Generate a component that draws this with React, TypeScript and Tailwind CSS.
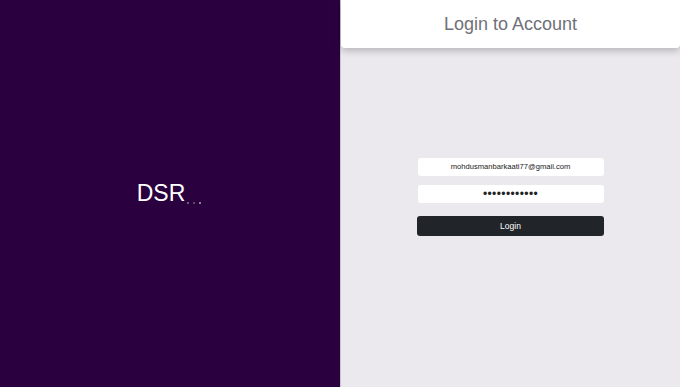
export default function App() {
  return (
    <div className="flex h-[387px] w-[680px] overflow-hidden" style={{ fontFamily: '"Liberation Sans", Arial, sans-serif' }}>
      <div className="flex h-full w-[340px] items-center justify-center bg-[#2a003f]">
        <div className="flex items-end pr-[2px]">
          <span className="text-[23px] leading-none text-white">DSR</span>
          <div className="mb-[1px] ml-[2px] flex gap-[4px]">
            <span className="h-[2px] w-[2px] bg-[#6d5c79]" />
            <span className="h-[2px] w-[2px] bg-[#5a4866]" />
            <span className="h-[2px] w-[2px] bg-[#8e7f99]" />
          </div>
        </div>
      </div>
      <div className="flex h-full w-[340px] flex-col border-l border-[#c9c6d0] bg-[#ebe9ee]">
        <div className="flex h-[48px] items-center justify-center rounded-b-[4px] bg-white shadow-[0_3px_7px_rgba(0,0,0,0.22)]">
          <span className="text-[18px] text-[#707079]">Login to Account</span>
        </div>
        <div className="flex flex-1 flex-col items-center pt-[110px]">
          <div className="flex h-[18px] w-[186px] items-center justify-center rounded-[3px] bg-white text-[7.6px] text-[#222]">
            mohdusmanbarkaati77@gmail.com
          </div>
          <div className="mt-[9px] flex h-[18px] w-[186px] items-center justify-center rounded-[3px] bg-white text-[12px] leading-none tracking-[0.4px] text-[#222]">
            ••••••••••••
          </div>
          <div className="mt-[13px] flex h-[20px] w-[187px] items-center justify-center rounded-[3px] bg-[#212529] text-[8.5px] text-white">
            Login
          </div>
        </div>
      </div>
    </div>
  );
}
